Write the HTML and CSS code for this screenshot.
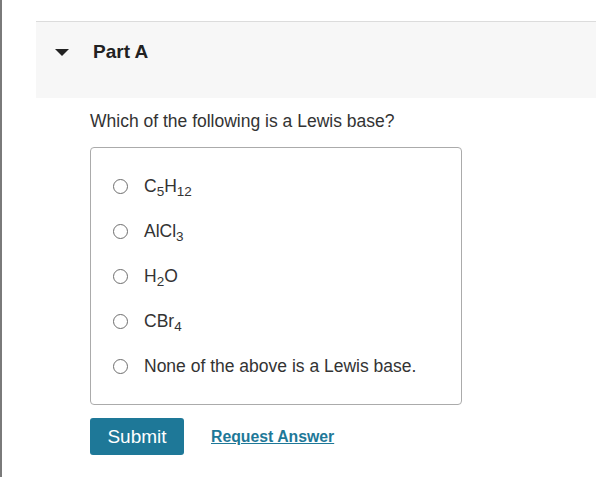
FILE: index.html
```html
<!DOCTYPE html>
<html>
<head>
<meta charset="utf-8">
<link rel="stylesheet" href="styles.css">
</head>
<body>
<div class="page">
  <div class="part-header">
    <span class="caret"></span>
    <span class="part-title">Part A</span>
  </div>
  <div class="part-body">
    <p class="question">Which of the following is a Lewis base?</p>
    <div class="choices">
      <label class="choice"><span class="radio"></span><span>C<sub>5</sub>H<sub>12</sub></span></label>
      <label class="choice"><span class="radio"></span><span>AlCl<sub>3</sub></span></label>
      <label class="choice"><span class="radio"></span><span>H<sub>2</sub>O</span></label>
      <label class="choice"><span class="radio"></span><span>CBr<sub>4</sub></span></label>
      <label class="choice"><span class="radio"></span><span>None of the above is a Lewis base.</span></label>
    </div>
    <div class="actions">
      <button class="submit">Submit</button>
      <a class="request" href="#">Request Answer</a>
    </div>
  </div>
</div>
</body>
</html>
```

FILE: styles.css
```css
html, body {
  margin: 0;
  padding: 0;
  background: #fff;
}
body {
  font-family: "Liberation Sans", Arial, sans-serif;
  color: #333;
}
.page {
  border-left: 2px solid #7a7a7a;
  height: 477px;
  box-sizing: border-box;
  padding-top: 21px;
  padding-left: 34px;
}
.part-header {
  border-top: 1px solid #dcdcdc;
  background: #f7f7f7;
  height: 77px;
  display: flex;
  align-items: flex-start;
  padding-top: 18px;
  padding-left: 19px;
  box-sizing: border-box;
}
.caret {
  width: 0;
  height: 0;
  border-left: 7px solid transparent;
  border-right: 7px solid transparent;
  border-top: 7px solid #222;
  margin-top: 9px;
}
.part-title {
  font-size: 19px;
  font-weight: bold;
  line-height: 24px;
  color: #222;
  margin-left: 24px;
}
.part-body {
  padding-left: 54px;
}
.question {
  margin: 12px 0 0;
  font-size: 17.5px;
  line-height: 22px;
  color: #333;
}
.choices {
  margin-top: 15px;
  width: 372px;
  box-sizing: border-box;
  border: 1px solid #ababab;
  border-radius: 4px;
  padding: 16px 0 15px 22px;
}
.choice {
  display: flex;
  align-items: center;
  height: 45px;
  font-size: 17.5px;
  color: #333;
}
.choice sub {
  font-size: 13.5px;
  line-height: 0;
  vertical-align: -4px;
}
.radio {
  width: 15px;
  height: 15px;
  border: 1.5px solid #6e6e6e;
  border-radius: 50%;
  box-sizing: border-box;
  margin-right: 16px;
  flex: none;
}
.actions {
  display: flex;
  align-items: center;
  margin-top: 13px;
}
.submit {
  width: 94px;
  height: 37px;
  background: #1e7898;
  color: #fff;
  border: none;
  border-radius: 3px;
  font-family: "Liberation Sans", Arial, sans-serif;
  font-size: 19px;
  padding: 0;
}
.request {
  margin-left: 27px;
  color: #1e7898;
  font-weight: bold;
  font-size: 15.8px;
  text-decoration: underline;
}
```
